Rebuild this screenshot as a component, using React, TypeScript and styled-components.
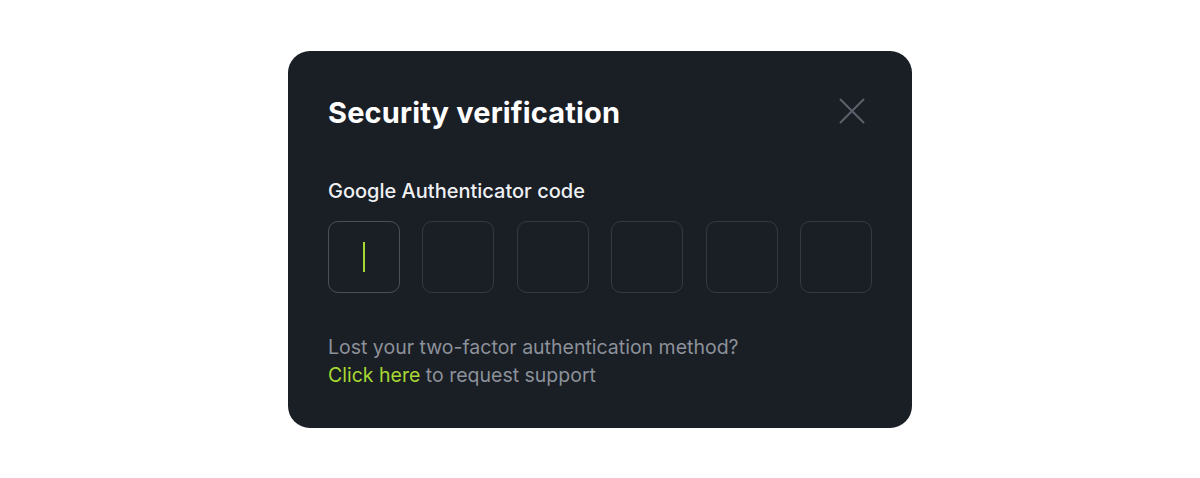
import styled, { createGlobalStyle } from "styled-components";

const GlobalStyle = createGlobalStyle`
  html, body {
    margin: 0;
    padding: 0;
    background: #ffffff;
    font-family: Inter, "Noto Sans", sans-serif;
  }
`;

const Page = styled.div`
  width: 100%;
  height: 100vh;
  display: flex;
  align-items: center;
  justify-content: center;
`;

const Modal = styled.div`
  width: 624px;
  box-sizing: border-box;
  padding: 40px 40px 39px 40px;
  background-color: #1a1e25;
  border-radius: 22px;
  display: flex;
  flex-direction: column;
`;

const Header = styled.div`
  display: flex;
  align-items: center;
  justify-content: space-between;
  height: 44px;
  margin-bottom: 42px;
`;

const Title = styled.h2`
  margin: 0;
  font-size: 29px;
  line-height: 44px;
  font-weight: 700;
  color: #ffffff;
  letter-spacing: 0.15px;
`;

const CloseButton = styled.button`
  width: 32px;
  height: 32px;
  padding: 0;
  margin: 0 4px 4px 0;
  border: none;
  background: transparent;
  cursor: pointer;
  display: flex;
  align-items: center;
  justify-content: center;
`;

const Label = styled.div`
  font-size: 20px;
  line-height: 28px;
  font-weight: 500;
  color: #eef0f3;
  margin-bottom: 16px;
`;

const CodeRow = styled.div`
  display: flex;
  justify-content: space-between;
  margin-bottom: 40px;
`;

const CodeBox = styled.div<{ $active?: boolean }>`
  width: 72px;
  height: 72px;
  box-sizing: border-box;
  border-radius: 10px;
  border: 1.5px solid ${(p) => (p.$active ? "#4a505b" : "#343a45")};
  display: flex;
  align-items: center;
  justify-content: center;
`;

const Caret = styled.div`
  width: 2px;
  height: 30px;
  background-color: #a8d932;
`;

const Help = styled.p`
  margin: 0;
  font-size: 19.5px;
  line-height: 28px;
  font-weight: 400;
  color: #8c919a;
`;

const SupportLink = styled.a`
  color: #a8d932;
  text-decoration: none;
  cursor: pointer;
`;

function CloseIcon() {
  return (
    <svg width="32" height="32" viewBox="0 0 32 32" fill="none">
      <path
        d="M4.5 4.5L27.5 27.5M27.5 4.5L4.5 27.5"
        stroke="#5c626c"
        strokeWidth="2"
        strokeLinecap="round"
      />
    </svg>
  );
}

export default function App() {
  const digits = [0, 1, 2, 3, 4, 5];

  return (
    <>
      <GlobalStyle />
      <Page>
        <Modal>
          <Header>
            <Title>Security verification</Title>
            <CloseButton aria-label="Close">
              <CloseIcon />
            </CloseButton>
          </Header>
          <Label>Google Authenticator code</Label>
          <CodeRow>
            {digits.map((i) => (
              <CodeBox key={"digit" + i} $active={i === 0}>
                {i === 0 && <Caret />}
              </CodeBox>
            ))}
          </CodeRow>
          <Help>
            Lost your two-factor authentication method?
            <br />
            <SupportLink>Click here</SupportLink> to request support
          </Help>
        </Modal>
      </Page>
    </>
  );
}
